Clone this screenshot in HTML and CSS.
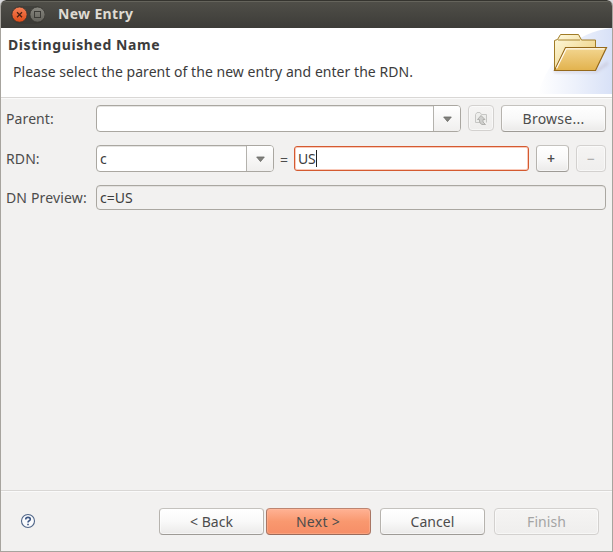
FILE: index.html
```html
<!DOCTYPE html>
<html lang="en">
<head>
<meta charset="utf-8">
<title>New Entry</title>
<link rel="stylesheet" href="styles.css">
</head>
<body>
<div class="window">
  <div class="titlebar">
    <svg class="controls" width="34" height="20" viewBox="0 0 34 20">
      <defs>
        <linearGradient id="close" x1="0" y1="0" x2="0" y2="1"><stop offset="0" stop-color="#f68158"/><stop offset="1" stop-color="#df4a16"/></linearGradient>
        <linearGradient id="max" x1="0" y1="0" x2="0" y2="1"><stop offset="0" stop-color="#888780"/><stop offset="1" stop-color="#62615b"/></linearGradient>
      </defs>
      <rect width="34" height="18" y="1" rx="9" fill="#363530" opacity=".45"/>
      <circle cx="8.5" cy="9.6" r="7.6" fill="url(#close)" stroke="#38342f" stroke-width=".8"/>
      <path d="M6 7.200l5 5M11 7.200l-5 5" stroke="#4a2113" stroke-width="1.3"/>
      <circle cx="26.5" cy="9.6" r="7.6" fill="url(#max)" stroke="#35342f" stroke-width=".8"/>
      <rect x="23.5" y="6.5" width="6" height="6" fill="none" stroke="#3c3b37"/>
    </svg>
    <span class="caption">New Entry</span>
  </div>
  <div class="header">
    <div class="heading">
      <h1>Distinguished Name</h1>
      <p>Please select the parent of the new entry and enter the RDN.</p>
    </div>
    <svg class="banner" width="86" height="66" viewBox="0 0 86 66">
      <defs>
        <linearGradient id="wash" x1="0" x2="1"><stop offset="0" stop-color="#fff"/><stop offset=".5" stop-color="#edf1fb"/><stop offset="1" stop-color="#d8e1f7"/></linearGradient>
        <linearGradient id="back" x1="0" y1="0" x2="1" y2="1"><stop offset="0" stop-color="#fffbe0"/><stop offset="1" stop-color="#e9c66c"/></linearGradient>
        <linearGradient id="front" x1="0" y1="0" x2="0" y2="1"><stop offset="0" stop-color="#f3d691"/><stop offset="1" stop-color="#e2b24d"/></linearGradient>
        <filter id="soft"><feGaussianBlur stdDeviation="1.5"/></filter>
      </defs>
      <path d="M12 66C22 31 49 4 86 0V66Z" fill="url(#wash)"/>
      <path d="M28 42L68 43L82 33V37L70 45H28Z" fill="#b6aebf" opacity=".4" filter="url(#soft)"/>
      <path d="M28.500 42.500V12.500L31.500 11.500L34.500 6.500H52.500L55.500 12H69.500V42.500Z" fill="url(#back)" stroke="#a07b25"/>
      <path d="M32 12H54" stroke="#a88532"/>
      <path d="M39.500 19.500H80.500L69.500 42.500H28.500Z" fill="url(#front)" stroke="#95691b" stroke-width="1.200"/>
      <path d="M30.500 40.500L40.300 20.800H78.500" fill="none" stroke="#fffaf0" stroke-width="1.300"/>
    </svg>
  </div>
  <div class="form">
    <div class="row parent">
      <label>Parent:</label>
      <div class="combo"><span class="value"></span><span class="drop"><svg width="9" height="7" viewBox="0 0 9 7"><path d="M.7 1H8.300L4.500 5.600Z" fill="#82827e" stroke="#666662" stroke-width=".8"/></svg></span></div>
      <button class="btn up" disabled><svg width="14" height="15" viewBox="0 0 14 15"><path d="M7 11.500H1.500V3.500L3 1.500H6L7.500 3.500H12.500V11.500" fill="#ededeb" stroke="#c6c6c4"/><path d="M7 4.500L11 8.500H9V11L11.500 13.500H8Q5.500 12.500 5.500 10V8.500H3.500Z" fill="#cfcfcd" stroke="#b1b1ae"/></svg></button>
      <button class="btn browse"><span>Browse...</span></button>
    </div>
    <div class="row rdn">
      <label>RDN:</label>
      <div class="combo type"><span class="value">c</span><span class="drop"><svg width="9" height="7" viewBox="0 0 9 7"><path d="M.7 1H8.300L4.500 5.600Z" fill="#82827e" stroke="#666662" stroke-width=".8"/></svg></span></div>
      <span class="equals">=</span>
      <div class="entry"><span class="us">US</span><i class="caret"></i></div>
      <button class="btn plus">+</button>
      <button class="btn minus" disabled>−</button>
    </div>
    <div class="row preview">
      <label><span class="dn">DN Preview:</span></label>
      <div class="readonly">c=US</div>
    </div>
  </div>
  <div class="footer">
    <svg class="help" width="16" height="16" viewBox="0 0 16 16"><circle cx="8" cy="8" r="6.500" fill="#fafbfd" stroke="#4f6587" stroke-width="1.100"/><path d="M5.700 6.500Q5.700 4.400 8 4.400Q10.300 4.400 10.300 6.200Q10.300 7.200 9.200 7.800Q8 8.400 8 9.500M8 10.700V12.200" fill="none" stroke="#3c5682" stroke-width="1.600"/></svg>
    <button class="btn back">&lt; Back</button>
    <button class="btn next">Next &gt;</button>
    <button class="btn cancel">Cancel</button>
    <button class="btn finish" disabled>Finish</button>
  </div>
</div>
</body>
</html>
```
FILE: styles.css
```css
* { box-sizing: border-box; }
body {
  margin: 0;
  background: #d9d9dc;
  font: 14px/20px "Noto Sans", "Open Sans", sans-serif;
  letter-spacing: -0.2px;
  color: #4c4c4c;
}
.window {
  width: 613px;
  height: 552px;
  display: flex;
  flex-direction: column;
  background: #f2f1f0;
  border: solid #a7a49e;
  border-width: 0 1px 1px;
  border-radius: 6px 6px 0 0;
  overflow: hidden;
}
.titlebar {
  height: 28px;
  flex: none;
  margin: 0 -1px;
  padding-left: 11px;
  display: flex;
  align-items: center;
  background: linear-gradient(#504f49, #3d3c38);
  border-top: 1px solid #35342f;
  box-shadow: inset 0 1px #65645c;
  border-radius: 6px 6px 0 0;
}
.caption {
  margin: -2px 0 0 13px;
  font-weight: 700;
  color: #dfdbd2;
  letter-spacing: 0.33px;
}
.header {
  height: 70px;
  flex: none;
  display: flex;
  justify-content: space-between;
  background: #fff;
  border-bottom: 1px solid #d9d7d5;
}
.heading { padding: 7px 0 0 7px; }
h1 {
  margin: 0;
  font-size: 14px;
  line-height: 20px;
  color: #3c3c3c;
  letter-spacing: 0.58px;
}
p { margin: 7px 0 0 5px; white-space: nowrap; color: #3c3c3c; letter-spacing: 0.04px; }
.banner { flex: none; }
.form { flex: 1; padding: 7px 6px 0 5px; box-shadow: inset 0 1px #fafafa; }
.row { display: flex; height: 27px; margin-bottom: 13px; }
label { width: 90px; flex: none; line-height: 27px; white-space: nowrap; letter-spacing: 0.1px; }
.dn { letter-spacing: 0.15px; }
.combo {
  width: 365px;
  display: flex;
  border: 1px solid #aaa7a1;
  border-radius: 4px;
  background: #fff;
  box-shadow: inset 0 1px #e6e5e3;
  color: #3c3c3c;
}
.value { flex: 1; padding-left: 3px; line-height: 26px; }
.drop {
  width: 27px;
  display: flex;
  align-items: center;
  justify-content: center;
  padding-top: 2px;
  border-left: 1px solid #b4b2ad;
  border-radius: 0 3px 3px 0;
  background: linear-gradient(#fff, #f0efee);
}
.type { width: 178px; }
.btn {
  height: 27px;
  padding: 0;
  display: flex;
  align-items: center;
  justify-content: center;
  border: 1px solid #b6b3ae;
  border-color: #c4c2be #b6b3ae #9e9b96;
  border-radius: 4px;
  background: linear-gradient(#fff, #f9f9f9 50%, #ebeae9);
  box-shadow: inset 0 0 0 1px #ffffff80;
  font: inherit;
  letter-spacing: 0.05px;
  color: #4c4c4c;
}
.btn:disabled {
  border-color: #d3d1cf;
  background: linear-gradient(#f5f4f3, #efeeed);
  color: #a4a4a4;
}
.up { width: 26px; height: 26px; margin: 0 7px; }
.browse { width: 105px; letter-spacing: 0.25px; }
.equals { width: 20px; text-align: center; line-height: 29px; }
.entry {
  width: 235px;
  height: 25px;
  margin-top: 1px;
  padding-left: 3px;
  display: flex;
  align-items: center;
  border: 1px solid #d45a30;
  border-radius: 3px;
  background: #fff;
  box-shadow: inset 0 0 0 1px #f9c9b9;
  color: #3c3c3c;
}
.caret { width: 1px; height: 17px; background: #222; }
.plus { width: 33px; margin: 0 7px; font-weight: 600; padding: 0 3px 0 0; }
.minus { width: 30px; }
.readonly {
  flex: 1;
  height: 25px;
  padding-left: 3px;
  line-height: 23px;
  border: 1px solid #aaa7a1;
  border-radius: 4px;
  box-shadow: inset 0 1px #e3e1df;
  color: #3c3c3c;
  letter-spacing: 0;
}
.preview label { line-height: 25px; }
.footer {
  height: 61px;
  flex: none;
  padding: 17px 12px 0 19px;
  display: flex;
  align-items: flex-start;
  border-top: 1px solid #d9d7d5;
  box-shadow: inset 0 1px #fafafa;
}
.help { margin: 5px 123px 0 0; }
.footer .btn { width: 105px; }
.footer .next {
  margin: 0 9px 0 2px;
  padding-right: 1px;
  letter-spacing: 0.3px;
  border-color: #bd8571 #a97664 #9b6b5b;
  background: linear-gradient(#ffb294, #f9986f 50%, #f68e67);
  box-shadow: inset 0 0 0 1px #ffc1a566;
}
.cancel { margin-right: 9px; }
```
